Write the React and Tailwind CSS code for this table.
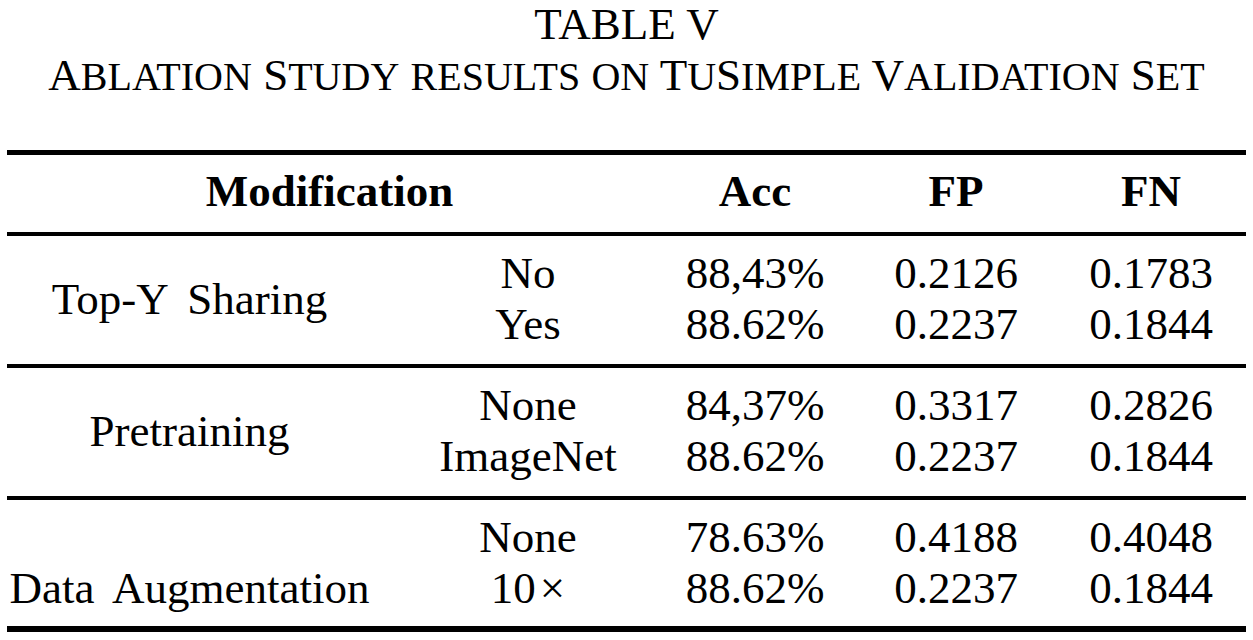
import React from "react";

const rows = [
  {
    name: "Top-Y Sharing",
    align: "center",
    items: [
      ["No", "88,43%", "0.2126", "0.1783"],
      ["Yes", "88.62%", "0.2237", "0.1844"],
    ],
  },
  {
    name: "Pretraining",
    align: "center",
    items: [
      ["None", "84,37%", "0.3317", "0.2826"],
      ["ImageNet", "88.62%", "0.2237", "0.1844"],
    ],
  },
  {
    name: "Data Augmentation",
    align: "end",
    items: [
      ["None", "78.63%", "0.4188", "0.4048"],
      [
        <span key="x">
          10<span className="ml-[4px]">×</span>
        </span>,
        "88.62%",
        "0.2237",
        "0.1844",
      ],
    ],
  },
];

const cols = "grid grid-cols-[365px_312px_142px_260px_130px_31px]";

function SC({ big, small }) {
  return (
    <>
      <span className="text-[45px]">{big}</span>
      <span className="text-[40px]">{small}</span>
    </>
  );
}

function Group({ g, pad }) {
  return (
    <div className={`${cols} border-t-[4px] border-black pt-[12px] ${pad} text-[45px] leading-[51px]`}>
      <div className={`flex justify-center [word-spacing:9px] ${g.align === "end" ? "items-end" : "items-center"}`}>
        {g.name}
      </div>
      {[0, 1, 2, 3].map((c) => (
        <div key={c} className="flex flex-col items-center">
          {g.items.map((r, i) => (
            <div key={i}>{r[c]}</div>
          ))}
        </div>
      ))}
      <div />
    </div>
  );
}

export default function App() {
  return (
    <div className="w-[1253px] h-[640px] bg-white text-black font-['Liberation_Serif',serif] overflow-hidden">
      <div className="pt-[2px] text-center text-[45px] leading-[45px]">TABLE V</div>
      <div className="mt-[6px] text-center text-[45px] leading-[45px]">
        <SC big="A" small="BLATION" /> <SC big="S" small="TUDY" /> <SC big="" small="RESULTS" />{" "}
        <SC big="" small="ON" /> <SC big="T" small="U" />
        <SC big="S" small="IMPLE" /> <SC big="V" small="ALIDATION" /> <SC big="S" small="ET" />
      </div>
      <div className="mx-[7px] mt-[51px] border-t-[5px] border-b-[6px] border-black">
        <div className={`${cols} pt-[11px] pb-[15px] text-[45px] leading-[51px] font-bold`}>
          <div className="col-span-2 pr-[32px] text-center">Modification</div>
          <div className="text-center">Acc</div>
          <div className="text-center">FP</div>
          <div className="text-center">FN</div>
          <div />
        </div>
        <Group g={rows[0]} pad="pb-[14px]" />
        <Group g={rows[1]} pad="pb-[14px]" />
        <Group g={rows[2]} pad="pb-[12px]" />
      </div>
    </div>
  );
}
